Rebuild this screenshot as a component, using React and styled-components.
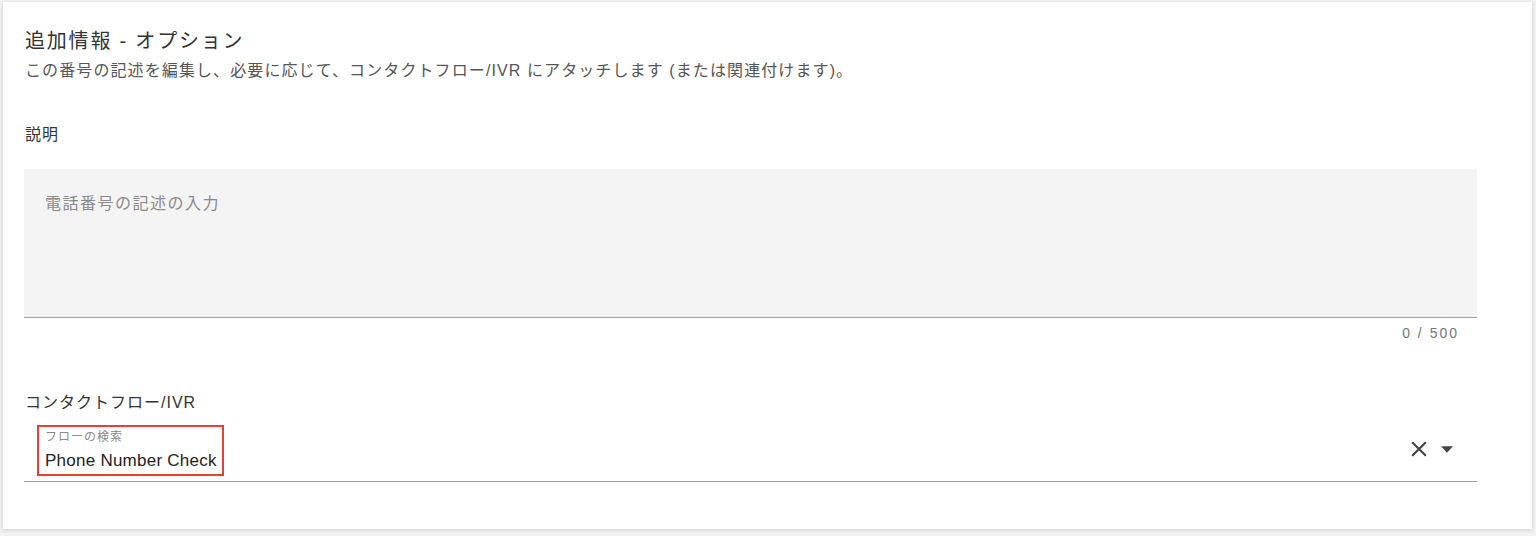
import styled, { createGlobalStyle } from 'styled-components';

const GlobalStyle = createGlobalStyle`
  html, body {
    margin: 0;
    padding: 0;
    background: #f2f2f2;
  }
  body {
    font-family: "Liberation Sans", "Noto Sans CJK JP", sans-serif;
    color: #333;
  }
`;

const Page = styled.div`
  padding: 2px 4px 7px 3px;
`;

const Card = styled.section`
  background: #ffffff;
  box-shadow: 0 1px 4px rgba(0, 0, 0, 0.16);
  padding: 26px 55px 47px 21px;
  height: 527px;
  box-sizing: border-box;
`;

const Title = styled.h2`
  margin: 0 0 0 1px;
  font-size: 20px;
  font-weight: 400;
  letter-spacing: 1.8px;
  line-height: 26px;
  color: #333;
`;

const Subtitle = styled.p`
  margin: 6px 0 0 1px;
  font-size: 16px;
  letter-spacing: 1.1px;
  line-height: 22px;
  color: #555;
`;

const Label = styled.div`
  margin: ${(p) => p.$top}px 0 0 1px;
  font-size: 16px;
  line-height: 22px;
  letter-spacing: 1px;
  color: #333;
`;

const TextArea = styled.textarea`
  display: block;
  width: 100%;
  height: 149px;
  margin-top: 23px;
  box-sizing: border-box;
  padding: 24px 20px 10px 21px;
  border: none;
  border-bottom: 1px solid #9e9e9e;
  background: #f4f4f4;
  resize: none;
  outline: none;
  font-family: "Liberation Sans", "Noto Sans CJK JP", sans-serif;
  font-size: 16px;
  letter-spacing: 1.5px;
  line-height: 22px;
  color: #333;

  &::placeholder {
    color: #8a8a8a;
  }
`;

const Counter = styled.div`
  margin-top: 6px;
  padding-right: 18px;
  text-align: right;
  font-size: 14px;
  letter-spacing: 2px;
  line-height: 18px;
  color: #777;
`;

const SelectField = styled.div`
  display: flex;
  align-items: center;
  margin-top: 11px;
  padding: 0 17px 5px 13px;
  border-bottom: 1px solid #9e9e9e;
`;

const Highlight = styled.div`
  display: flex;
  flex-direction: column;
  gap: 4px;
  padding: 3px 5px 1px 6px;
  border: 2px solid #e5432d;
`;

const FloatLabel = styled.span`
  font-size: 12px;
  letter-spacing: 1px;
  line-height: 15px;
  color: #888;
`;

const Value = styled.span`
  font-size: 17px;
  letter-spacing: 0.25px;
  line-height: 24px;
  color: #222;
`;

const Actions = styled.div`
  display: flex;
  align-items: center;
  gap: 2px;
  margin-left: auto;
  margin-top: -3px;
  color: #444;
`;

const IconButton = styled.button`
  display: flex;
  padding: 0;
  border: none;
  background: none;
  color: inherit;
  cursor: pointer;
`;

const CloseIcon = () => (
  <svg width="26" height="26" viewBox="0 0 24 24" fill="currentColor">
    <path d="M19 6.41L17.59 5 12 10.59 6.41 5 5 6.41 10.59 12 5 17.59 6.41 19 12 13.41 17.59 19 19 17.59 13.41 12z" />
  </svg>
);

const ArrowIcon = () => (
  <svg width="26" height="26" viewBox="0 0 24 24" fill="currentColor">
    <path d="M6.5 9.5l5.5 6 5.5-6z" />
  </svg>
);

export default function App() {
  return (
    <>
      <GlobalStyle />
      <Page>
        <Card>
          <Title>追加情報 - オプション</Title>
          <Subtitle>
            この番号の記述を編集し、必要に応じて、コンタクトフロー/IVR にアタッチします (または関連付けます)。
          </Subtitle>

          <Label $top={42}>説明</Label>
          <TextArea placeholder="電話番号の記述の入力" />
          <Counter>0 / 500</Counter>

          <Label $top={50}>コンタクトフロー/IVR</Label>
          <SelectField>
            <Highlight>
              <FloatLabel>フローの検索</FloatLabel>
              <Value>Phone Number Check</Value>
            </Highlight>
            <Actions>
              <IconButton aria-label="clear">
                <CloseIcon />
              </IconButton>
              <IconButton aria-label="open">
                <ArrowIcon />
              </IconButton>
            </Actions>
          </SelectField>
        </Card>
      </Page>
    </>
  );
}
